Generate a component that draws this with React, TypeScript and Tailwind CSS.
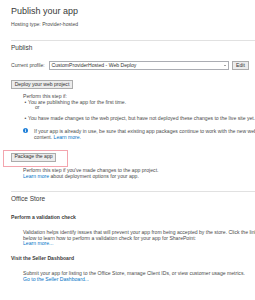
import React from "react";

const Link = ({ children }: { children: React.ReactNode }) => (
  <span className="text-[#0072c6]">{children}</span>
);

const InfoIcon = () => (
  <svg viewBox="0 0 10 10" className="h-[5px] w-[5px]">
    <circle cx="5" cy="5" r="5" fill="#1e7fd8" />
    <rect x="4.2" y="4.2" width="1.6" height="4" fill="#fff" />
    <rect x="4.2" y="1.8" width="1.6" height="1.6" fill="#fff" />
  </svg>
);

export default function App() {
  return (
    <div
      className="w-[255px] h-[300px] overflow-hidden bg-white text-[#4a4a4a] text-[5.1px] whitespace-nowrap"
      style={{ fontFamily: '"Liberation Sans", Arial, sans-serif' }}
    >
      <div className="pl-[11px] flex flex-col">
        <div className="mt-[4px] h-[14px] leading-[14px] text-[9px] text-[#3a3a3a]">Publish your app</div>
        <div className="mt-[3px] h-[6px] leading-[6px]">Hosting type: Provider-hosted</div>
        <div className="mt-[13px] h-[1px] bg-[#e1e1e1]" />
        <div className="mt-[3px] h-[8px] leading-[8px] text-[6.5px] text-[#3a3a3a]">Publish</div>

        {/* profile row */}
        <div className="mt-[9px] h-[9px] flex items-center">
          <span className="w-[38px] shrink-0">Current profile:</span>
          <div className="w-[180px] shrink-0 h-[9px] border border-[#abadb3] bg-white flex items-center justify-between pl-[1.5px] pr-[2px] text-[#333]">
            <span>CustomProviderHosted - Web Deploy</span>
            <span className="w-0 h-0 border-l-[1.5px] border-r-[1.5px] border-t-[1.5px] border-l-transparent border-r-transparent border-t-[#444]" />
          </div>
          <div className="ml-[3px] w-[17px] shrink-0 h-[9px] border border-[#acacac] bg-[#ececec] flex items-center justify-center text-[#333]">
            Edit
          </div>
        </div>

        <div className="mt-[10px] w-[62px] h-[9px] border border-[#acacac] bg-[#ececec] flex items-center justify-center text-[#333]">
          Deploy your web project
        </div>

        <div className="pl-[12px] flex flex-col">
          <div className="mt-[5px] h-[5.5px] leading-[5.5px]">Perform this step if:</div>
          <div className="h-[5.5px] leading-[5.5px] flex">
            <span className="w-[5px] shrink-0 pl-[1.5px]">•</span>
            <span>You are publishing the app for the first time.</span>
          </div>
          <div className="h-[5.5px] leading-[5.5px] pl-[12px]">or</div>
          <div className="mt-[5.75px] h-[5.5px] leading-[5.5px] flex">
            <span className="w-[5px] shrink-0 pl-[1.5px]">•</span>
            <span>You have made changes to the web project, but have not deployed these changes to the live site yet.</span>
          </div>
          <div className="mt-[6px] h-[6px] leading-[6px] flex items-center">
            <span className="w-[11px] shrink-0 flex items-center">
              <InfoIcon />
            </span>
            <span>If your app is already in use, be sure that existing app packages continue to work with the new web</span>
          </div>
          <div className="h-[6.5px] leading-[6.5px] pl-[11px]">
            content. <Link>Learn more.</Link>
          </div>
        </div>

        {/* highlighted package button */}
        <div className="mt-[9.5px] -ml-[8px] w-[65px] h-[17px] border border-[#f3a5ae] pl-[7px] pt-[1.75px]">
          <div className="w-[45px] h-[9px] border border-[#acacac] bg-[#ececec] flex items-center justify-center text-[#333]">
            Package the app
          </div>
        </div>

        <div className="pl-[12px] flex flex-col">
          <div className="mt-[0.5px] h-[6px] leading-[6px]">Perform this step if you've made changes to the app project.</div>
          <div className="h-[6px] leading-[6px]">
            <Link>Learn more</Link> about deployment options for your app.
          </div>
        </div>

        <div className="mt-[12px] h-[1px] bg-[#e1e1e1]" />
        <div className="mt-[2.3px] h-[8px] leading-[8px] text-[6.5px] text-[#3a3a3a]">Office Store</div>

        <div className="mt-[11.4px] h-[6px] leading-[6px] font-semibold text-[#3a3a3a]">Perform a validation check</div>
        <div className="pl-[12px] flex flex-col">
          <div className="mt-[10.5px] h-[5.5px] leading-[5.5px]">
            Validation helps identify issues that will prevent your app from being accepted by the store. Click the link
          </div>
          <div className="h-[5.5px] leading-[5.5px]">
            below to learn how to perform a validation check for your app for SharePoint:
          </div>
          <div className="h-[5.5px] leading-[5.5px]">
            <Link>Learn more...</Link>
          </div>
        </div>

        <div className="mt-[8px] h-[6px] leading-[6px] font-semibold text-[#3a3a3a]">Visit the Seller Dashboard</div>
        <div className="pl-[12px] flex flex-col">
          <div className="mt-[9.3px] h-[6px] leading-[6px]">
            Submit your app for listing to the Office Store, manage Client IDs, or view customer usage metrics.
          </div>
          <div className="h-[6px] leading-[6px]">
            <Link>Go to the Seller Dashboard...</Link>
          </div>
        </div>
      </div>
    </div>
  );
}
